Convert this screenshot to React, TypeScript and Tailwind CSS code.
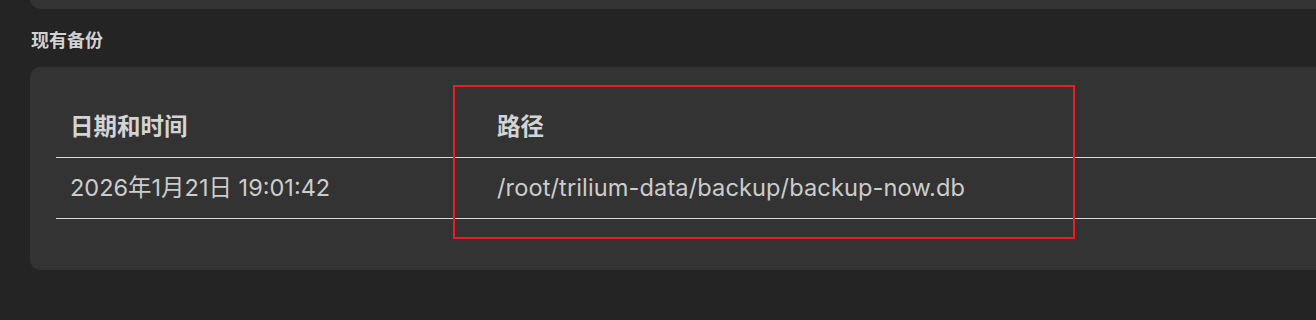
const rows = [
  { date: '2026年1月21日 19:01:42', path: '/root/trilium-data/backup/backup-now.db' },
];

export default function App() {
  return (
    <div className="relative h-[320px] w-full overflow-hidden bg-[#242424] font-['Inter','Noto_Sans_CJK_SC',sans-serif]">
      {/* previous section card, mostly scrolled off */}
      <div className="ml-[30px] mt-[-21px] h-[30px] w-[1320px] rounded-[10px] bg-[#333333]" />

      <h4 className="ml-[31px] mt-[22px] text-[18px] font-bold leading-[20px] text-[#d2d2d2]">现有备份</h4>

      <div className="ml-[30px] mt-[16px] w-[1320px] rounded-[10px] bg-[#333333] pl-[26px] pt-[29px] pb-[51px]">
        <table className="w-full border-collapse text-left">
          <thead>
            <tr className="h-[61px] border-b border-[#d8d8d8]">
              <th className="w-[427px] pl-[14px] text-[23.5px] font-bold text-[#d4d4d4]">日期和时间</th>
              <th className="pl-[14px] text-[23.5px] font-bold text-[#d4d4d4]">路径</th>
            </tr>
          </thead>
          <tbody>
            {rows.map((r, i) => (
              <tr key={i} className="h-[61px] border-b border-[#d8d8d8]">
                <td className="pl-[14px] text-[23.5px] text-[#cccccc]">{r.date}</td>
                <td className="pl-[14px] text-[23.6px] tracking-[0.1px] text-[#cccccc]">{r.path}</td>
              </tr>
            ))}
          </tbody>
        </table>
      </div>

      {/* annotation box */}
      <div className="absolute left-[453px] top-[85px] h-[154px] w-[622px] border-2 border-[#ec1c24]" />
    </div>
  );
}
